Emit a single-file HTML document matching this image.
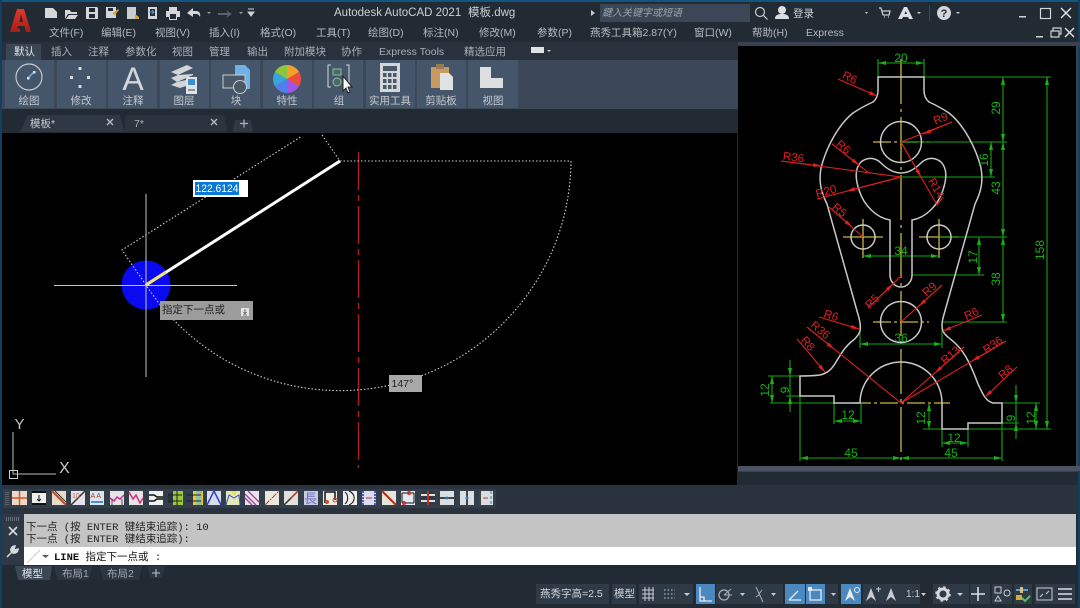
<!DOCTYPE html>
<html><head><meta charset="utf-8"><style>
html,body{margin:0;padding:0;background:#222a34;width:1080px;height:608px;overflow:hidden}
svg{display:block;position:absolute;left:0;top:0;filter:blur(.3px)}
text{font-family:"Liberation Sans","Noto Sans CJK SC",sans-serif}
.m{font-size:10.5px;fill:#b4bac2}
.r{font-size:10.5px;fill:#c3c8ce;text-anchor:middle}
.g{font-size:12px;fill:#16b316;text-anchor:middle}
.rd{font-size:11.5px;fill:#e02020;text-anchor:middle}
.mono{font-family:"Liberation Mono","Noto Sans CJK SC",monospace;font-size:10.5px}
</style></head><body>
<svg width="1080" height="608" viewBox="0 0 1080 608">
<defs>
<marker id="ar" markerWidth="9" markerHeight="6" refX="8" refY="3" orient="auto" markerUnits="userSpaceOnUse"><path d="M0 1L8 3L0 5z" fill="#e02020"/></marker>
<marker id="ag" markerWidth="9" markerHeight="6" refX="8" refY="3" orient="auto-start-reverse" markerUnits="userSpaceOnUse"><path d="M0 1L8 3L0 5z" fill="#16b316"/></marker>
<linearGradient id="lg" x1="0" y1="0" x2="0" y2="1"><stop offset="0" stop-color="#e03a2a"/><stop offset="1" stop-color="#a81c14"/></linearGradient>
<clipPath id="cv"><rect x="2" y="133" width="735" height="352"/></clipPath>
</defs>
<rect width="1080" height="608" fill="#222a34"/>
<rect width="1080" height="2" fill="#14557f"/>
<rect x="0" width="2" height="608" fill="#123f60"/>
<rect x="1078" width="2" height="608" fill="#123f60"/>

<!-- logo -->
<path d="M10 32L17 9H24L31 32H26L24.5 26H18L17 28L20 29V32zM19.5 22H23L21 14z" fill="url(#lg)"/>
<!-- QAT -->
<g fill="#d4d6d9">
<path d="M45 8h8l4 4v6H45z"/>
<path d="M65 10h5l1 2h6v2h-9l-3 5zM69 15h9l-3 4H66z"/>
<path d="M86 7h11l1 1v11H86zM89 8v4h6V8zM89 14v4h6v-4z" fill-rule="evenodd"/>
<path d="M106 7h10v11h-10zM108 8v3h5V8z" fill-rule="evenodd"/>
<path d="M127 7h9v12h-9z" fill="#c9ccd0"/>
<path d="M148 7h9v12h-9zM150 9v7h5V9z" fill-rule="evenodd"/>
<path d="M169 7h8v4h3v6h-3v3h-8v-3h-3v-6h3zM170 14v5h6v-5z" fill-rule="evenodd"/>
<path d="M187 13l6-5v3h3c3 0 5 2 4 6-1-2-2-3-4-3h-3v3z"/>
</g>
<path d="M135 14l4 3v2h-4z" fill="#d8a73a"/><path d="M113 13l5-4 1 1-5 6z" fill="#d8a73a"/><path d="M149 12h5M152 10l2 2-2 2" stroke="#4fa3d8" fill="none"/>
<path d="M218 13h10l-2-3 6 4-6 4 2-3h-10z" fill="#5a6470"/>
<path d="M207 12l2 2 2-2zM239 12l2 2 2-2z" fill="#9aa0a8"/>
<path d="M248 9h6M248 12l3 4 3-4z" stroke="#cfd2d6" fill="#cfd2d6"/>
<text x="334" y="16" font-size="11.5" fill="#cdd1d6">Autodesk AutoCAD 2021</text>
<text x="468" y="16" font-size="11.5" fill="#cdd1d6">模板.dwg</text>
<path d="M591 10l4 3-4 3z" fill="#c9ccd0"/>
<rect x="600" y="4" width="150" height="18" fill="#3b4757"/>
<text x="602" y="16" font-size="10" font-style="italic" fill="#9aa3ad">鍵入关键字或短语</text>
<circle cx="760" cy="12" r="4.5" fill="none" stroke="#c8ccd2" stroke-width="1.2"/><path d="M763.5 15.5l4 4" stroke="#c8ccd2" stroke-width="1.2"/>
<circle cx="782" cy="10" r="4" fill="#dcdfe2"/><path d="M775 19c0-4 3-5 7-5s7 1 7 5z" fill="#dcdfe2"/>
<text x="793" y="17" font-size="10.5" fill="#cfd2d6">登录</text>
<path d="M865 12l3 0-1.5 2z" fill="#c8ccd2"/>
<path d="M879 8h2l2 7h6l1-4h-8M884 17h1M888 17h1" stroke="#c8ccd2" stroke-width="1.3" fill="none"/>
<path d="M904 7h3l6 12h-4l-1-2h-5l-1 2h-4zM904.5 14h2.5l-1.2-3z" fill="#dcdfe2" fill-rule="evenodd"/>
<path d="M917 12h4l-2 2z" fill="#c8ccd2"/>
<rect x="929" y="5" width="1" height="16" fill="#3c4654"/>
<circle cx="944" cy="13" r="7" fill="#d2d5d9"/><text x="944" y="17" font-size="11" font-weight="bold" fill="#222a34" text-anchor="middle">?</text>
<path d="M956 12h4l-2 2z" fill="#c8ccd2"/>
<rect x="1019" y="16" width="7" height="1.5" fill="#cfd2d6"/>
<rect x="1040.500" y="8.500" width="10" height="10" fill="none" stroke="#cfd2d6" stroke-width="1.200"/>
<path d="M1061 8l10 10M1071 8l-10 10" stroke="#e4e6e8" stroke-width="1.400"/>
<rect x="1036" y="36" width="7" height="1.500" fill="#cfd2d6"/>
<path d="M1051 31h8v6h-8zM1053 31v-3h8v6h-2" fill="none" stroke="#cfd2d6" stroke-width="1.200"/>
<path d="M1065 28l9 9M1074 28l-9 9" stroke="#e4e6e8" stroke-width="1.400"/>

<!-- menu -->
<text class="m" x="49" y="36">文件(F)</text><text class="m" x="101" y="36">编辑(E)</text><text class="m" x="155" y="36">视图(V)</text><text class="m" x="209" y="36">插入(I)</text><text class="m" x="260" y="36">格式(O)</text><text class="m" x="316" y="36">工具(T)</text><text class="m" x="368" y="36">绘图(D)</text><text class="m" x="423" y="36">标注(N)</text><text class="m" x="479" y="36">修改(M)</text><text class="m" x="537" y="36">参数(P)</text><text class="m" x="590" y="36">燕秀工具箱2.87(Y)</text><text class="m" x="694" y="36">窗口(W)</text><text class="m" x="752" y="36">帮助(H)</text><text class="m" x="806" y="36">Express</text>

<!-- ribbon -->
<rect x="2" y="42" width="736" height="18" fill="#28313c"/>
<rect x="6" y="44" width="35" height="16" fill="#3b4655"/>
<rect x="2" y="60" width="736" height="49" fill="#3c4758"/>
<g font-size="10.500">
<text x="14" y="55" fill="#e4e6e8">默认</text>
<text x="51" y="55" fill="#aab0b8">插入</text><text x="88" y="55" fill="#aab0b8">注释</text><text x="125" y="55" fill="#aab0b8">参数化</text><text x="172" y="55" fill="#aab0b8">视图</text><text x="209" y="55" fill="#aab0b8">管理</text><text x="247" y="55" fill="#aab0b8">输出</text><text x="284" y="55" fill="#aab0b8">附加模块</text><text x="341" y="55" fill="#aab0b8">协作</text><text x="379" y="55" fill="#aab0b8">Express Tools</text><text x="464" y="55" fill="#aab0b8">精选应用</text>
</g>
<rect x="531" y="47" width="13" height="6" fill="#dfe1e4"/><path d="M547 50h4l-2 2z" fill="#c8ccd2"/>
<g fill="#46566a">
<rect x="5" y="60" width="49" height="48"/><rect x="57" y="60" width="49" height="48"/><rect x="108" y="60" width="49" height="48"/><rect x="160" y="60" width="49" height="48"/><rect x="211" y="60" width="49" height="48"/><rect x="263" y="60" width="49" height="48"/><rect x="314" y="60" width="49" height="48"/><rect x="366" y="60" width="49" height="48"/><rect x="417" y="60" width="49" height="48"/><rect x="468" y="60" width="50" height="48"/>
</g>
<text class="r" x="29" y="104">绘图</text><text class="r" x="81" y="104">修改</text><text class="r" x="133" y="104">注释</text><text class="r" x="184" y="104">图层</text><text class="r" x="236" y="104">块</text><text class="r" x="287" y="104">特性</text><text class="r" x="339" y="104">组</text><text class="r" x="390" y="104">实用工具</text><text class="r" x="441" y="104">剪贴板</text><text class="r" x="493" y="104">视图</text>
<!-- ribbon icons -->
<circle cx="29" cy="77" r="13" fill="none" stroke="#c6cbd1" stroke-width="1.200"/><path d="M28 78l6-6" stroke="#6fb2e6" stroke-width="1.500"/><rect x="27" y="77" width="2.500" height="2.500" fill="#dfe3e6"/><rect x="33" y="71" width="2.500" height="2.500" fill="#dfe3e6"/>
<g fill="#d8dbde"><rect x="78.500" y="67" width="3" height="3"/><rect x="70" y="76" width="3" height="3"/><rect x="87" y="76" width="3" height="3"/><rect x="78.500" y="85" width="3" height="3"/></g>
<text x="133" y="90" font-size="32" fill="#d4d7da" text-anchor="middle">A</text>
<g fill="#d2d5d8"><path d="M171 72l16-7 6 3-15 7z"/><path d="M171 78l7-3 15-1v1l-16 7z"/><path d="M171 85l6-3 9-2v6l-6 2z"/></g><rect x="186" y="77" width="11" height="17" fill="#dfe2e5"/><rect x="188" y="79" width="7" height="6" fill="#3a8fd1"/><path d="M188 90h7" stroke="#444"/>
<path d="M235 65h10l5 5v19h-15z" fill="#6fb2e6"/><rect x="223" y="75" width="22" height="13" fill="#4a5868" stroke="#c8ccd2"/><circle cx="240" cy="87" r="6.500" fill="#4a5868" stroke="#c8ccd2"/>
<circle cx="287" cy="79" r="14" fill="#e8503c"/><path d="M287 79V65a14 14 0 0 1 12 7z" fill="#f2a12a"/><path d="M287 79l12-7a14 14 0 0 1 0 14z" fill="#e8503c"/><path d="M287 79V65a14 14 0 0 0-12 7z" fill="#8cc63f"/><path d="M287 79l-12-7a14 14 0 0 0 0 14z" fill="#35a6dc"/><path d="M287 79l-12 7a14 14 0 0 0 12 7z" fill="#4f7ff0"/><path d="M287 79v14a14 14 0 0 0 12-7z" fill="#a055e8"/>
<path d="M331 65h-3v22h3M346 65h3v22h-3" fill="none" stroke="#d2d5d8"/><rect x="333" y="69" width="8" height="6" fill="#4a6a60" stroke="#8fc0a0"/><circle cx="337" cy="82" r="4" fill="#4a6a60" stroke="#8fc0a0"/><path d="M343 76v15l3-3 2 5 2-1-2-5h4z" fill="#fff" stroke="#222"/>
<rect x="380" y="63" width="20" height="29" fill="#d4d7da"/><rect x="383" y="66" width="14" height="5" fill="#4a5868"/><g fill="#4a5868"><rect x="383" y="73" width="3.500" height="4"/><rect x="388" y="73" width="3.500" height="4"/><rect x="393" y="73" width="3.500" height="4"/><rect x="383" y="79" width="3.500" height="4"/><rect x="388" y="79" width="3.500" height="4"/><rect x="393" y="79" width="3.500" height="4"/><rect x="383" y="85" width="3.500" height="4"/><rect x="388" y="85" width="3.500" height="4"/><rect x="393" y="85" width="3.500" height="4"/></g>
<rect x="431" y="67" width="18" height="21" fill="#c79a63"/><rect x="436" y="64" width="8" height="5" fill="#9b7a50"/><path d="M440 73h9l4 4v13h-13z" fill="#dfe1e3"/>
<path d="M480 67h11v11h12v10h-23z" fill="#dcdee0"/>
<!-- doc tabs -->
<rect x="2" y="109" width="736" height="24" fill="#222a34"/>
<path d="M20 132l8-17h92l4 17z" fill="#2f3945"/><path d="M124 132l2-17h98l4 17z" fill="#2a333e"/><path d="M233 132l2-12h16l2 12z" fill="#2f3945"/>
<text x="30" y="127" font-size="10.500" fill="#c8ccd1">模板*</text><text x="134" y="127" font-size="10.500" fill="#aeb3ba">7*</text>
<path d="M107 119l6 6M113 119l-6 6M211 119l6 6M217 119l-6 6" stroke="#b8bcc2" stroke-width="1.300"/>
<path d="M240 123.500h8M244 119.500v8" stroke="#aeb3ba" stroke-width="1.200"/>

<!-- canvas -->
<rect x="2" y="133" width="735" height="352" fill="#000"/>
<g clip-path="url(#cv)">
<path d="M358.500 152V468" stroke="#a81c1c" stroke-width="1.500" stroke-dasharray="38 5 6 5" fill="none"/>
<circle cx="146" cy="285" r="24.500" fill="#0a0af0"/>
<path d="M54 285.500H237M146 194V377" stroke="#c6c6c6" stroke-width="1"/>
<g fill="none" stroke="#cfcfcf" stroke-width="1.100" stroke-dasharray="1.500 2">
<path d="M340 161H571A231 231 0 0 1 146 285"/>
<path d="M146 285L122 250L302 136M322 135L340 161"/>
</g>
<path d="M146 285L340 161" stroke="#fff" stroke-width="3"/>
<path d="M146 285L166 272" stroke="#f2e27a" stroke-width="3"/>
</g>
<rect x="193" y="180" width="55" height="17" fill="#fff"/><rect x="195" y="182" width="44" height="13" fill="#0a78d7"/><text x="195.500" y="192" font-size="11" fill="#fff" textLength="43" lengthAdjust="spacingAndGlyphs">122.6124</text>
<rect x="160" y="301" width="93" height="19" fill="#9c9c9c"/><text x="162" y="313" font-size="10.500" fill="#222">指定下一点或</text><rect x="241" y="308" width="8" height="8" fill="#e4e4e4"/><path d="M245 309v4M243 315h4M243.500 312l1.500 2 1.500-2" stroke="#555" stroke-width=".8" fill="none"/>
<rect x="389" y="375" width="33" height="17" fill="#a8a8a8"/><text x="391.500" y="387" font-size="10.500" fill="#222">147°</text>
<path d="M13 432V474H56" fill="none" stroke="#bdbdbd"/><rect x="9.500" y="470.500" width="8" height="8" fill="none" stroke="#d0d0d0"/>
<text x="19.500" y="429" font-size="15" fill="#c8c8c8" text-anchor="middle">Y</text><text x="64.500" y="473" font-size="16" fill="#c8c8c8" text-anchor="middle">X</text>

<!-- right panel -->
<rect x="738" y="42" width="342" height="4" fill="#39434f"/>
<rect x="738" y="42" width="340" height="430" fill="#39434f"/>
<rect x="738" y="46" width="338" height="420" fill="#000"/>
<rect x="738" y="466" width="342" height="5" fill="#4a535f"/>
<!-- centerlines -->
<g stroke="#c8b83c" stroke-width="1.300" fill="none">
<path d="M901 59V462" stroke-dasharray="45 5 3 5"/>
<path d="M873 142H929M873 322H929M853 403H950" stroke-dasharray="18 3 3 3"/>
<path d="M843 237H883M919 237H959M863 219V258M939 219V258"/>
</g>
<!-- green -->
<g stroke="#12a812" stroke-width="1.100" fill="none">
<path d="M878 59V77M924 59V77M901 77H1051M901 142H1007M901 177H995M939 237H1007M912 275H984M942 322H1007"/>
<path d="M860 325V348M942 325V348M834 403V424M861 403V424M942 429V447M968 429V447M800 396V461M1002 423V461M768 376H800M786 396H800M770 403H834M1002 403H1040M1002 423H1019M923 429H1051"/>
<path d="M878 63H924" marker-start="url(#ag)" marker-end="url(#ag)"/>
<path d="M1003 77V142" marker-start="url(#ag)" marker-end="url(#ag)"/>
<path d="M1003 142V237" marker-start="url(#ag)" marker-end="url(#ag)"/>
<path d="M1003 237V322" marker-start="url(#ag)" marker-end="url(#ag)"/>
<path d="M1047 77V429" marker-start="url(#ag)" marker-end="url(#ag)"/>
<path d="M991 142V177" marker-start="url(#ag)" marker-end="url(#ag)"/>
<path d="M979 237V275" marker-start="url(#ag)" marker-end="url(#ag)"/>
<path d="M863 256H939" marker-start="url(#ag)" marker-end="url(#ag)"/>
<path d="M860 344H942" marker-start="url(#ag)" marker-end="url(#ag)"/>
<path d="M834 421H861" marker-start="url(#ag)" marker-end="url(#ag)"/>
<path d="M942 443H968" marker-start="url(#ag)" marker-end="url(#ag)"/>
<path d="M800 458H901" marker-start="url(#ag)" marker-end="url(#ag)"/>
<path d="M901 458H1002" marker-start="url(#ag)" marker-end="url(#ag)"/>
<path d="M772 376V403" marker-start="url(#ag)" marker-end="url(#ag)"/>
<path d="M790 360V376" marker-end="url(#ag)"/><path d="M790 412V396" marker-end="url(#ag)"/><path d="M790 376V396"/>
<path d="M1016 385V403" marker-end="url(#ag)"/><path d="M1016 439V423" marker-end="url(#ag)"/><path d="M1016 403V423"/>
<path d="M1036 403V429" marker-start="url(#ag)" marker-end="url(#ag)"/>
</g>
<!-- outline -->
<g fill="none" stroke="#c8c8c8" stroke-width="1.500">
<path d="M901 77H878V90Q878 98 873 102Q862 107 853 113C838 125 826 148 821 168C819 180 820 190 827 204L859 318Q861 326 860 331Q858 337 851 342C844 348 841 354 836 362C832 369 828 373 820 375Q812 376 800 376V396H834V403H860A41 41 0 0 1 942 403V429H968V423H1002V403H993C985 401 982 392 978 384C972 368 966 354 957 345C950 338 945 336 943 331Q941 326 943 318L975 204C982 190 983 180 981 168C976 148 964 125 949 113Q940 107 929 102Q924 98 924 90V77H901"/>
<path d="M890 220V275A11 12 0 0 0 912 275V220C925 218 938 206 943 190C947 178 947 168 941 162C935 157 927 157 921 163C914 170 908 173 901 173C894 173 888 170 881 163C875 157 867 157 861 162C855 168 855 178 859 190C864 206 877 218 890 220Z"/>
<circle cx="901" cy="142" r="20.500"/><circle cx="901" cy="322" r="20.500"/><circle cx="863" cy="237" r="12"/><circle cx="939" cy="237" r="12"/>
</g>
<!-- red -->
<g stroke="#e02020" stroke-width="1.100" fill="none">
<path d="M838 79L877 96" marker-end="url(#ar)"/>
<path d="M952 122L901 142"/><path d="M952 122L923 134" marker-end="url(#ar)"/>
<path d="M832 144L869 173"/><path d="M832 144L859 165" marker-end="url(#ar)"/>
<path d="M781 161L901 177"/><path d="M781 161L821 166" marker-end="url(#ar)"/>
<path d="M817 199L901 177"/><path d="M901 177L847 191" marker-end="url(#ar)"/>
<path d="M901 142L937 205L943 197"/><path d="M901 142L921 177" marker-end="url(#ar)"/>
<path d="M829 207L863 237" /><path d="M829 207L852 227" marker-end="url(#ar)"/>
<path d="M868 308L901 276"/><path d="M868 308L893 284" marker-end="url(#ar)"/>
<path d="M942 285L901 322"/><path d="M942 285L919 306" marker-end="url(#ar)"/>
<path d="M819 317L859 329" marker-end="url(#ar)"/>
<path d="M807 327L901 403"/><path d="M807 327L834 349" marker-end="url(#ar)"/>
<path d="M797 339L825 372" marker-end="url(#ar)"/>
<path d="M982 315L943 331" marker-end="url(#ar)"/>
<path d="M964 347L901 403"/><path d="M964 347L935 373" marker-end="url(#ar)"/>
<path d="M1006 341L901 403"/><path d="M1006 341L972 361" marker-end="url(#ar)"/>
<path d="M1017 367L985 397" marker-end="url(#ar)"/>
</g>
<g class="tx">
<text class="rd" transform="translate(848 81) rotate(27)">R6</text>
<text class="rd" transform="translate(942 122) rotate(-22)">R9</text>
<text class="rd" transform="translate(841 150) rotate(40)">R6</text>
<text class="rd" transform="translate(793 161) rotate(8)">R36</text>
<text class="rd" transform="translate(827 195) rotate(-15)">R20</text>
<text class="rd" transform="translate(933 190) rotate(60)">R14</text>
<text class="rd" transform="translate(837 213) rotate(40)">R5</text>
<text class="rd" transform="translate(875 304) rotate(-45)">R5</text>
<text class="rd" transform="translate(932 292) rotate(-42)">R9</text>
<text class="rd" transform="translate(830 319) rotate(18)">R6</text>
<text class="rd" transform="translate(818 333) rotate(40)">R36</text>
<text class="rd" transform="translate(805 346) rotate(50)">R8</text>
<text class="rd" transform="translate(973 317) rotate(-25)">R6</text>
<text class="rd" transform="translate(953 358) rotate(-40)">R13</text>
<text class="rd" transform="translate(995 348) rotate(-35)">R36</text>
<text class="rd" transform="translate(1008 375) rotate(-40)">R8</text>
<text class="g" x="901" y="62">20</text>
<text class="g" transform="translate(1000 108) rotate(-90)">29</text>
<text class="g" transform="translate(988 160) rotate(-90)">16</text>
<text class="g" transform="translate(1000 188) rotate(-90)">43</text>
<text class="g" transform="translate(977 257) rotate(-90)">17</text>
<text class="g" transform="translate(1000 279) rotate(-90)">38</text>
<text class="g" transform="translate(1044 250) rotate(-90)">158</text>
<text class="g" x="901" y="255">34</text>
<text class="g" x="901" y="342">36</text>
<text class="g" x="848" y="419">12</text>
<text class="g" x="954" y="442">12</text>
<text class="g" x="851" y="457">45</text>
<text class="g" x="951" y="457">45</text>
<text class="g" transform="translate(769 390) rotate(-90)">12</text>
<text class="g" transform="translate(789 390) rotate(-90)">9</text>
<text class="g" transform="translate(1015 418) rotate(-90)">9</text>
<text class="g" transform="translate(1035 418) rotate(-90)">12</text>
<text class="g" transform="translate(925 418) rotate(-90)">12</text>
</g>
<path d="M929 403V429" stroke="#12a812" marker-start="url(#ag)" marker-end="url(#ag)" fill="none"/>

<!-- toolbar -->
<rect x="2" y="485" width="1076" height="29" fill="#29323d"/>
<rect x="3" y="489" width="493" height="19" fill="#333e4b"/>
<path d="M6 492v13M8 492v13" stroke="#7c8692" stroke-dasharray="1 1"/>
<g>
<rect x="12" y="491" width="15" height="14" fill="#e8dcc8"/><path d="M12 498H27M19.500 491v14" stroke="#e0502a" stroke-width="1.500"/>
<rect x="32" y="491" width="14" height="14" fill="#f0efe8"/><path d="M32 492H46M32 504H46" stroke="#111" stroke-width="2"/><path d="M39 495v6M37 499l2 2 2-2" stroke="#114" fill="none"/>
<rect x="52" y="491" width="14" height="14" fill="#e8dcc8"/><path d="M52 491L66 505" stroke="#b3542a" stroke-width="2"/><path d="M55 491L66 502" stroke="#333"/>
<rect x="71" y="491" width="14" height="14" fill="#e6e2ea"/><path d="M71 505L85 491" stroke="#333" stroke-width="1.500"/><text x="72" y="498" font-size="7" fill="#c06040">10</text>
<rect x="90" y="491" width="14" height="14" fill="#d8e6ee"/><text x="90.500" y="498" font-size="7" fill="#d03020">A A</text><path d="M91 502h12" stroke="#2a6fb0" stroke-width="1.500"/>
<rect x="110" y="491" width="14" height="14" fill="#e8e4e4"/><path d="M110 498l4 3 3-4 3 2 4-4" stroke="#c030a0" fill="none" stroke-width="1.500"/><path d="M112 505v-6M122 505v-6" stroke="#555"/>
<rect x="129" y="491" width="14" height="14" fill="#e8e4e4"/><path d="M129 492l4 7 3-4 4 8 3-5" stroke="#d0307a" fill="none" stroke-width="1.500"/>
<rect x="149" y="491" width="14" height="14" fill="#f0f0f0"/><path d="M149 495h5l3 2h6M149 501h5l3-2h6" stroke="#111" fill="none" stroke-width="1.500"/>
<rect x="173" y="491" width="10" height="14" fill="#9ac840"/><rect x="168" y="493" width="5" height="10" fill="#29323d"/><path d="M168 495h14M168 501h14M177 491v14" stroke="#222"/>
<rect x="193" y="491" width="10" height="14" fill="#f0c830"/><rect x="196" y="491" width="6" height="14" fill="#5ab8e0" opacity=".6"/><path d="M187 495h14M187 501h14" stroke="#222"/>
<rect x="207" y="491" width="14" height="14" fill="#d8dce8"/><path d="M207 505l7-14 7 14" stroke="#2a3fd0" fill="none" stroke-width="1.500"/>
<rect x="226" y="491" width="14" height="14" fill="#e4e8c0"/><path d="M226 505l3-10 5 3 5-3 1 10" stroke="#3050c0" fill="none"/><path d="M231 491l3 5 3-5z" fill="#f0e040"/>
<rect x="245" y="491" width="14" height="14" fill="#e8e4e8"/><path d="M245 494l11 11M248 491l11 11M245 498l7 7" stroke="#a040a0" stroke-width="1.300"/>
<rect x="265" y="491" width="14" height="14" fill="#ece8e0"/><path d="M265 505L279 491" stroke="#c04020" stroke-dasharray="6 1 2 1"/>
<rect x="284" y="491" width="14" height="14" fill="#e4e0dc"/><path d="M284 505L298 491" stroke="#333" stroke-width="1.500"/><path d="M291 498L298 491" stroke="#d04020" stroke-width="1.500"/>
<rect x="304" y="491" width="14" height="14" fill="#c8cce0"/><text x="304" y="503" font-size="13" fill="#6a70c0">長</text>
<rect x="323" y="491" width="14" height="14" fill="#f0ece0"/><path d="M325 503v-11h10v8" stroke="#111" fill="none" stroke-width="1.500"/><circle cx="327" cy="502" r="2" fill="#d05030"/><circle cx="335" cy="500" r="2" fill="none" stroke="#d05030"/>
<rect x="343" y="491" width="14" height="14" fill="#efefef"/><path d="M345 492a8 8 0 0 1 0 12M349 491a10 8 0 0 1 0 14" stroke="#111" fill="none"/>
<rect x="362" y="491" width="14" height="14" fill="#dcdcf0"/><path d="M363 491v14M375 491v14" stroke="#2030b0" stroke-width="1.500" stroke-dasharray="2 1"/><path d="M366 498h6" stroke="#d03020"/>
<rect x="382" y="491" width="14" height="14" fill="#e8e4dc"/><path d="M382 491L396 505" stroke="#b03018" stroke-width="2"/>
<rect x="401" y="491" width="14" height="14" fill="#e4e8f0"/><path d="M402 493h12M402 503h12M402 493v10M414 493v10" stroke="#111" fill="none"/><circle cx="409" cy="493" r="2" fill="#d03030"/><circle cx="404" cy="503" r="2" fill="#d03030"/>
<rect x="421" y="491" width="14" height="14" fill="#2f3a46"/><path d="M421 495h14M421 501h14" stroke="#e8e0d8" stroke-width="2"/><path d="M428 491v14" stroke="#c03020" stroke-width="2"/>
<rect x="440" y="491" width="14" height="14" fill="#dcdfe2"/><path d="M440 498h14" stroke="#111" stroke-width="1.500"/><circle cx="447" cy="498" r="1.500" fill="#2a7fc0"/>
<rect x="460" y="491" width="14" height="14" fill="#dcdfe2"/><path d="M467 491v14" stroke="#111" stroke-width="1.500"/><circle cx="467" cy="498" r="1.500" fill="#2a7fc0"/>
<rect x="479" y="491" width="14" height="14" fill="#dcdfe2"/><path d="M480 491v14" stroke="#111" stroke-width="1.500"/><path d="M483 498h5" stroke="#d03020"/><path d="M491 491v14" stroke="#2a7fc0" stroke-dasharray="3 2"/>
</g>

<!-- command -->
<rect x="2" y="514" width="22" height="51" fill="#2f3945"/>
<path d="M6 518h14M6 520h14" stroke="#9aa2ab" stroke-dasharray="1 1"/>
<path d="M9 527l8 8M17 527l-8 8" stroke="#d8dadd" stroke-width="1.600"/>
<path d="M7 557l7-7M15 546a4 4 0 0 0-4 5l2 2a4 4 0 0 0 5-4l-3 1-1-1z" stroke="#d8dadd" fill="#d8dadd" stroke-width="1.500"/>
<rect x="24" y="514" width="1052" height="33" fill="#c4c4c4"/>
<rect x="24" y="547" width="1052" height="18" fill="#fff"/>
<text class="mono" x="26" y="530" fill="#222">下一点 (按 ENTER 键结束追踪): 10</text>
<text class="mono" x="26" y="542" fill="#222">下一点 (按 ENTER 键结束追踪):</text>
<path d="M27 563L40 550" stroke="#ccc"/>
<path d="M42 555h7l-3.500 3z" fill="#555"/>
<text class="mono" x="54" y="560" fill="#111" font-weight="bold">LINE <tspan font-weight="normal">指定下一点或 :</tspan></text>

<!-- layout tabs -->
<path d="M15 566l3 14h32l2-14z" fill="#3c4755"/><path d="M54 566l3 14h32l3-14z" fill="#2c3541"/><path d="M100 566l3 14h36l3-14z" fill="#2c3541"/><path d="M148 566l2 12h12l3-12z" fill="#2c3541"/>
<text x="22" y="577" font-size="10.500" fill="#e4e6e8">模型</text><text x="62" y="577" font-size="10.500" fill="#9ea5ae">布局1</text><text x="107" y="577" font-size="10.500" fill="#9ea5ae">布局2</text>
<path d="M152 573h8M156 569v8" stroke="#a8aeb6" stroke-width="1.300"/>

<!-- status -->
<g fill="#2f3a47"><rect x="536" y="584" width="73" height="20"/><rect x="612" y="584" width="24" height="20"/><rect x="639" y="584" width="54" height="20"/><rect x="716" y="584" width="67" height="20"/><rect x="825" y="584" width="13" height="20"/><rect x="863" y="584" width="57" height="20"/><rect x="933" y="584" width="36" height="20"/><rect x="970" y="584" width="20" height="20"/><rect x="992" y="584" width="20" height="20"/><rect x="1014" y="584" width="18" height="20"/><rect x="1035" y="584" width="40" height="20"/></g>
<text x="540" y="597" font-size="10.500" fill="#d2d5d9">燕秀字高=2.5</text>
<text x="614" y="597" font-size="10.500" fill="#d2d5d9">模型</text>
<path d="M642 590h12M642 594h12M642 598h12M645 587v14M649 587v14M653 587v14" stroke="#c8ccd1"/>
<path d="M664 590h11M664 594h11M664 598h11" stroke="#c8ccd1" stroke-dasharray="1.500 2"/>
<path d="M684 593h6l-3 3z" fill="#c8ccd1"/>
<rect x="696" y="584" width="19" height="20" fill="#4a88bf"/><path d="M700 587v14h12M700 597h4v4" stroke="#e6e9ec" fill="none" stroke-width="1.300"/>
<circle cx="724" cy="595" r="5" fill="none" stroke="#a9afb6" stroke-width="1.200"/><path d="M724 595l7-6M724 595h8" stroke="#a9afb6"/>
<path d="M740 593h5l-2.500 3zM771 593h5l-2.500 3zM831 593h5l-2.500 3z" fill="#c8ccd1"/>
<path d="M756 587l7 15M760 594l-4 3M762 590l-3 4" stroke="#a9afb6" fill="none"/>
<rect x="785" y="584" width="20" height="20" fill="#4a88bf"/><path d="M789 600h12M789 600l9-9" stroke="#e6e9ec" stroke-width="1.300" fill="none"/>
<rect x="806" y="584" width="19" height="20" fill="#4a88bf"/><rect x="810" y="590" width="11" height="10" fill="none" stroke="#e6e9ec" stroke-width="1.300"/><rect x="808" y="587" width="4" height="4" fill="#e6e9ec"/>
<rect x="841" y="584" width="20" height="20" fill="#4a88bf"/><path d="M845 601l5-13 5 13-5-4z" fill="#e9ecef"/><circle cx="857" cy="590" r="2.500" fill="none" stroke="#e9ecef"/>
<path d="M866 601l5-13 5 13-5-4z" fill="#c8ccd1"/><path d="M876 589h5M878.500 587v5" stroke="#c8ccd1"/>
<path d="M886 601l5-13 5 13-5-4z" fill="#c8ccd1"/>
<text x="906" y="597" font-size="10" fill="#c8ccd1">1:1</text><path d="M921 593h5l-2.500 3z" fill="#c8ccd1"/>
<circle cx="943" cy="594" r="5" fill="none" stroke="#d4d7da" stroke-width="3"/><circle cx="943" cy="594" r="7" fill="none" stroke="#d4d7da" stroke-width="1.500" stroke-dasharray="2.500 3"/>
<path d="M957 593h6l-3 3z" fill="#c8ccd1"/>
<path d="M971 594h14M978 587v14" stroke="#dcdfe2" stroke-width="1.600"/>
<rect x="995" y="587" width="6" height="6" fill="none" stroke="#c8ccd1"/><circle cx="1007" cy="593" r="3" fill="none" stroke="#c8ccd1"/><path d="M998 596l-3 5h6z" fill="none" stroke="#c8ccd1"/>
<path d="M1016 590h12" stroke="#5aa0d8" stroke-width="2"/><rect x="1016" y="595" width="6" height="5" fill="#d8a83a"/><path d="M1022 598l3 3 5-5" stroke="#58c060" stroke-width="2" fill="none"/><rect x="1020" y="587" width="3" height="6" fill="#d8c080"/>
<rect x="1037" y="588" width="15" height="12" fill="none" stroke="#c8ccd1"/><path d="M1040 597l3-3M1049 591l-3 3" stroke="#c8ccd1"/>
<path d="M1058 589h14M1058 594h14M1058 599h14" stroke="#dcdfe2" stroke-width="1.500"/>
</svg>
</body></html>
